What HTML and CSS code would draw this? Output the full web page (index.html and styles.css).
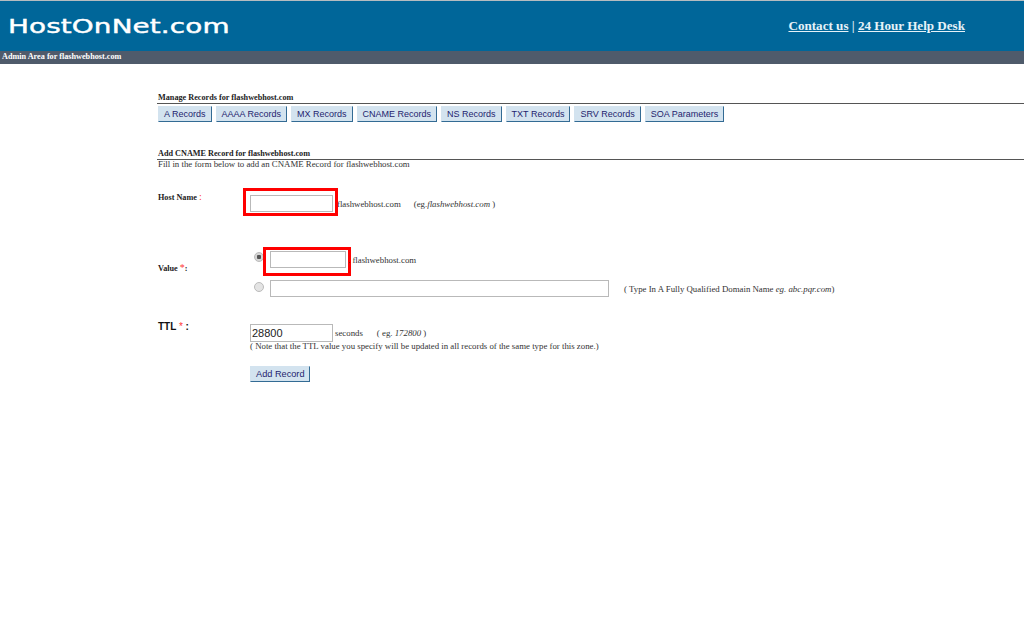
FILE: index.html
```html
<!DOCTYPE html>
<html lang="en">
<head>
<meta charset="utf-8">
<title>Add CNAME Record</title>
<link rel="stylesheet" href="styles.css">
</head>
<body>
<header class="top">
  <div class="logo">HostOnNet.com</div>
  <nav class="help"><a href="#">Contact us</a> | <a href="#">24 Hour Help Desk</a></nav>
</header>
<div class="subbar">Admin Area for flashwebhost.com</div>
<main class="main">
  <h2 class="heading">Manage Records for flashwebhost.com</h2>
  <div class="tabs">
    <button class="btn">A Records</button>
    <button class="btn">AAAA Records</button>
    <button class="btn">MX Records</button>
    <button class="btn">CNAME Records</button>
    <button class="btn">NS Records</button>
    <button class="btn">TXT Records</button>
    <button class="btn">SRV Records</button>
    <button class="btn">SOA Parameters</button>
  </div>
  <h2 class="heading second">Add CNAME Record for flashwebhost.com</h2>
  <p class="intro">Fill in the form below to add an CNAME Record for flashwebhost.com</p>

  <div class="row row-host">
    <div class="label label-host">Host Name <span class="req">:</span></div>
    <div class="field-line">
      <span class="marked marked-host"><input class="input input-host" type="text"></span>
      <span class="suffix suffix-host">flashwebhost.com</span>
      <span class="hint hint-host">(eg.<i>flashwebhost.com</i> )</span>
    </div>
  </div>

  <div class="row row-value">
    <div class="label label-value">Value <span class="req">*</span>:</div>
    <div class="value-fields">
      <div class="field-line line-sub">
        <input class="radio" type="radio" name="v" checked>
        <span class="marked marked-value"><input class="input input-sub" type="text"></span>
        <span class="suffix suffix-value">. flashwebhost.com</span>
      </div>
      <div class="field-line line-fqdn">
        <input class="radio" type="radio" name="v">
        <input class="input input-fqdn" type="text">
        <span class="hint hint-fqdn">( Type In A Fully Qualified Domain Name <i>eg. abc.pqr.com</i>)</span>
      </div>
    </div>
  </div>

  <div class="row row-ttl">
    <div class="label label-ttl">TTL <span class="req">*</span> :</div>
    <div>
      <div class="field-line">
        <input class="input input-ttl" type="text" value="28800">
        <span class="suffix suffix-ttl">seconds</span>
        <span class="hint hint-ttl">( eg. <i>172800</i> )</span>
      </div>
      <p class="note">( Note that the TTL value you specify will be updated in all records of the same type for this zone.)</p>
      <button class="btn add">Add Record</button>
    </div>
  </div>
</main>
</body>
</html>
```
FILE: styles.css
```css
*, *::after { box-sizing: border-box; }
html, body { margin: 0; padding: 0; background: #fff; }
body { height: 626px; overflow: hidden; font-family: "Liberation Serif", serif; font-size: 8.8px; color: #333; }

.top { height: 51px; background: #006699; border-top: 1px solid #b5bcc0; display: flex; justify-content: space-between; align-items: center; padding: 0 59px 0 8px; }
.logo { font-family: "DejaVu Sans", sans-serif; font-size: 20px; color: #fff; -webkit-text-stroke: 0.45px #fff; letter-spacing: 0.1px; transform: scaleX(1.39); transform-origin: left center; line-height: 1; margin-top: -1px; }
.help { font-size: 13.1px; font-weight: bold; color: #d8e8f0; }
.help a { color: #e6f2f8; }

.subbar { height: 13px; background: #4f5b6b; color: #fff; font-weight: bold; font-size: 8.2px; line-height: 12px; padding-left: 2px; }

.main { padding: 30px 0 0 158px; }
.heading { margin: 0; font-size: 8.2px; font-weight: bold; color: #222; line-height: 8px; height: 10px; }
.heading::after { content: ""; display: block; height: 1px; background: #555; margin-top: 1px; margin-left: -1px; }
.tabs { display: flex; gap: 4px; margin-top: 2px; }
.btn { height: 16px; padding: 0 5px; font-family: "Liberation Sans", sans-serif; font-size: 9px; color: #24246e; background: #d3e3ef; border: 1px solid #d3e3ef; border-right-color: #336b94; border-bottom-color: #336b94; border-radius: 0; line-height: 14px; }
.heading.second { margin-top: 28px; }
.intro { margin: 0; line-height: 9px; }

.row { display: grid; grid-template-columns: 92px 1fr; }
.row-host { margin-top: 22px; }
.row-value { margin-top: 39px; }
.row-ttl { margin-top: 27px; }

.label { font-weight: bold; color: #222; font-size: 8.2px; }
.label-host { line-height: 12px; }
.label-value { padding-top: 11px; }
.label-ttl { font-family: "Liberation Sans", sans-serif; font-size: 10px; color: #111; margin-top: -3px; line-height: 12px; }
.req { color: #f33; font-weight: normal; font-size: 10px; }

.field-line { display: flex; align-items: center; }
.marked { position: relative; display: block; }
.marked::after { content: ""; position: absolute; border: 3px solid #f00; pointer-events: none; }
.marked-host::after { left: -7px; top: -7px; width: 95px; height: 28px; }
.marked-value::after { left: -7px; top: -4px; width: 88px; height: 29px; }

.input { display: block; height: 17px; border: 1px solid #b9b9b9; background: #fff; padding: 0 1px; font-family: "Liberation Sans", sans-serif; font-size: 11px; color: #222; outline: 0; border-radius: 0; margin: 0; }
.input-host { width: 83px; }
.input-sub { width: 76px; }
.input-fqdn { width: 339px; }
.input-ttl { width: 83px; height: 18px; }

.suffix, .hint { white-space: nowrap; }
.suffix-host { margin-left: 4px; }
.hint-host { margin-left: 13px; }
.hint-fqdn { margin-left: 15px; }
.hint-ttl { margin-left: 14px; }
.suffix-value { margin-left: 2px; position: relative; z-index: 1; }
.suffix-ttl { margin-left: 2px; }
.row-host .field-line { margin-top: 4px; }

.value-fields { margin-left: 4px; }
.radio { appearance: none; width: 10px; height: 10px; margin: 0 6px 0 0; border: 1px solid #bbb; border-radius: 50%; background: #e4e4e4; flex: none; position: relative; top: -2px; }
.radio:checked { background: radial-gradient(circle, #555 0 2px, #d6d6d6 2.5px); top: -3px; }
.line-fqdn { margin-top: 12px; }

.note { margin: 0; line-height: 9px; }
.add { display: block; margin-top: 15px; font-size: 9.2px; padding: 0 4px 0 5px; }
```
